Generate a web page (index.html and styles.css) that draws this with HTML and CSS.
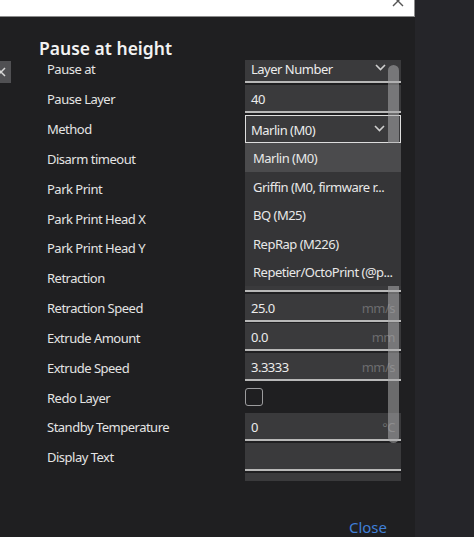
FILE: index.html
```html
<!DOCTYPE html>
<html lang="en">
<head>
  <meta charset="UTF-8">
  <title>Pause at height</title>
  <link rel="stylesheet" href="styles.css">
</head>
<body>
  <div class="window">
    <div class="dialog">
      <div class="topbar">
        <svg class="close-x" width="12" height="12" viewBox="0 0 12 12"><path d="M1 1 L11 11 M11 1 L1 11" stroke="#555" stroke-width="1.4" fill="none"/></svg>
      </div>
      <div class="side-tab">
        <svg width="11" height="22" viewBox="0 0 11 22"><path d="M-3 7 L5 15 M5 7 L-3 15" stroke="#d8d8d8" stroke-width="1.5" fill="none"/></svg>
      </div>

      <h1 class="title">Pause at height</h1>

      <div class="form">
        <div class="rows">
          <div class="row">
            <span class="label">Pause at</span>
            <div class="field combo"><span class="value">Layer Number</span><svg class="chev" width="11" height="7" viewBox="0 0 11 7"><path d="M1 1 L5.5 5.5 L10 1" stroke="#cfcfcf" stroke-width="1.6" fill="none"/></svg></div>
          </div>
          <div class="row">
            <span class="label">Pause Layer</span>
            <div class="field"><span class="value">40</span></div>
          </div>
          <div class="row">
            <span class="label">Method</span>
            <div class="field combo focused"><span class="value">Marlin (M0)</span><svg class="chev" width="11" height="7" viewBox="0 0 11 7"><path d="M1 1 L5.5 5.5 L10 1" stroke="#cfcfcf" stroke-width="1.6" fill="none"/></svg></div>
          </div>
          <!-- these four sit under the open list -->
          <div class="row">
            <span class="label">Disarm timeout</span>
            <div class="field"></div>
          </div>
          <div class="row">
            <span class="label">Park Print</span>
            <div class="check"></div>
          </div>
          <div class="row">
            <span class="label">Park Print Head X</span>
            <div class="field"></div>
          </div>
          <div class="row">
            <span class="label">Park Print Head Y</span>
            <div class="field"></div>
          </div>
          <div class="row">
            <span class="label">Retraction</span>
            <div class="field"></div>
          </div>
          <div class="row">
            <span class="label">Retraction Speed</span>
            <div class="field"><span class="value">25.0</span><span class="unit">mm/s</span></div>
          </div>
          <div class="row">
            <span class="label">Extrude Amount</span>
            <div class="field"><span class="value">0.0</span><span class="unit">mm</span></div>
          </div>
          <div class="row">
            <span class="label">Extrude Speed</span>
            <div class="field"><span class="value">3.3333</span><span class="unit">mm/s</span></div>
          </div>
          <div class="row">
            <span class="label">Redo Layer</span>
            <div class="check"></div>
          </div>
          <div class="row">
            <span class="label">Standby Temperature</span>
            <div class="field"><span class="value">0</span><span class="unit">°C</span></div>
          </div>
          <div class="row">
            <span class="label">Display Text</span>
            <div class="field"><span class="value"></span></div>
          </div>
          <div class="row">
            <span class="label">G-code Before Pause</span>
            <div class="field"><span class="value"></span></div>
          </div>
        </div>
      </div>

      <div class="scroll-thumb"></div>

      <ul class="popup">
        <li class="active">Marlin (M0)</li>
        <li>Griffin (M0, firmware r...</li>
        <li>BQ (M25)</li>
        <li>RepRap (M226)</li>
        <li>Repetier/OctoPrint (@p...</li>
      </ul>

      <div class="footer"><span class="close-btn">Close</span></div>
    </div>
    <div class="side"></div>
  </div>
</body>
</html>
```

FILE: styles.css
```css
html, body {
  margin: 0;
  height: 100%;
}
body {
  background: #252529;
  font-family: "Noto Sans", "Open Sans", sans-serif;
  color: #e6e6e6;
  overflow: hidden;
}
.window {
  display: flex;
  height: 537px;
}
.dialog {
  position: relative;
  width: 415px;
  flex-shrink: 0;
  background: #1f1f21;
  display: flex;
  flex-direction: column;
  overflow: hidden;
}
.side {
  flex: 1;
  background: #252529;
}

/* white strip of the window above */
.topbar {
  height: 16px;
  background: #fff;
  border-bottom: 1px solid #8c8c8c;
  border-right: 1px solid #8c8c8c;
  position: relative;
  overflow: hidden;
}
.close-x {
  position: absolute;
  left: 392px;
  top: -5px;
}

.side-tab {
  position: absolute;
  left: 0;
  top: 61px;
  width: 11px;
  height: 22px;
  background: #505053;
}
.side-tab svg { display: block; }

.title {
  margin: 0;
  padding: 19px 0 0 39px;
  height: 24px;
  line-height: 24px;
  font-size: 17.5px;
  font-weight: 600;
  color: #f2f2f2;
}

/* scrolling list of settings */
.form {
  height: 426px;
  overflow: hidden;
}
.rows {
  margin-top: -5px;
  padding-left: 47px;
  display: flex;
  flex-direction: column;
  gap: 1.85px;
  font-size: 13px;
  letter-spacing: -0.5px;
}
.row {
  display: flex;
  align-items: center;
  height: 28px;
}
.label {
  width: 198px;
  padding-top: 1px;
  color: #e4e4e4;
}
.field {
  width: 156px;
  height: 28px;
  box-sizing: border-box;
  background: #3a3a3c;
  border-bottom: 2px solid #b8b8b8;
  display: flex;
  align-items: center;
  padding: 2px 6px 0;
}
.field .value {
  flex: 1;
  color: #ececec;
}
.field .unit {
  color: #6c6c6e;
}
.combo .chev {
  margin-right: 9px;
  margin-top: -2px;
}
.field.focused {
  border: 1px solid #dedede;
  padding-left: 5px;
}
.check {
  width: 18px;
  height: 18px;
  box-sizing: border-box;
  border: 1.5px solid #9c9c9e;
  border-radius: 3px;
}

.scroll-thumb {
  position: absolute;
  left: 388px;
  top: 65px;
  width: 11px;
  height: 378px;
  border-radius: 6px;
  background: rgba(170, 170, 172, 0.55);
}

/* open combobox list */
.popup {
  position: absolute;
  left: 245px;
  top: 143px;
  width: 156px;
  margin: 0;
  padding: 0;
  list-style: none;
  background: #353537;
  font-size: 13px;
  letter-spacing: -0.5px;
}
.popup li {
  height: 28.6px;
  line-height: 30px;
  padding-left: 8px;
  color: #e8e8e8;
  white-space: nowrap;
}
.popup li.active {
  background: #4b4b4d;
}

.footer {
  flex: 1;
  display: flex;
  justify-content: flex-end;
  padding: 36px 28px 0 0;
}
.close-btn {
  font-size: 15px;
  line-height: 20px;
  color: #3f7fd8;
}
```
